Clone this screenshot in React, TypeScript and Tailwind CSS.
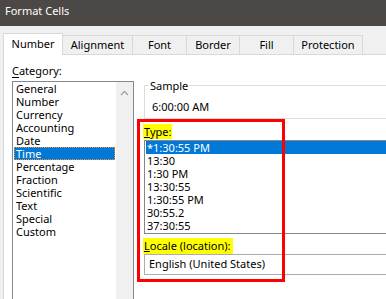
const TABS = ['Number', 'Alignment', 'Font', 'Border', 'Fill', 'Protection']
const TAB_WIDTHS = ['w-[60px]', 'w-[70px]', 'w-[54px]', 'w-[53px]', 'w-[54px]', 'w-[69px]']

const CATEGORIES = [
  'General',
  'Number',
  'Currency',
  'Accounting',
  'Date',
  'Time',
  'Percentage',
  'Fraction',
  'Scientific',
  'Text',
  'Special',
  'Custom',
]

const TYPES = ['*1:30:55 PM', '13:30', '1:30 PM', '13:30:55', '1:30:55 PM', '30:55.2', '37:30:55']

export default function App() {
  return (
    <div className="relative w-[386px] h-[299px] overflow-hidden bg-[#f0f0f0] text-[11px] text-black font-['Noto_Sans',sans-serif] flex flex-col">
      {/* title bar */}
      <div className="h-[26px] shrink-0 bg-[#4b4845] text-white pl-[5px] pt-[3px] leading-[15px]">
        Format Cells
      </div>

      {/* tabs */}
      <div className="h-[29px] shrink-0 flex items-end pl-[3px]">
        {TABS.map((tab, i) =>
          i === 0 ? (
            <div
              key={tab}
              className={`${TAB_WIDTHS[i]} h-[22px] bg-white border border-b-0 border-[#d9d9d9] flex items-center justify-center`}
            >
              {tab}
            </div>
          ) : (
            <div
              key={tab}
              className={`${TAB_WIDTHS[i]} h-[20px] border-t border-r border-b border-[#d9d9d9] flex items-center justify-center`}
            >
              {tab}
            </div>
          ),
        )}
        <div className="flex-1 border-b border-[#d9d9d9]" />
      </div>

      {/* page */}
      <div className="flex-1 ml-[3px] bg-white border-l border-[#d9d9d9] flex pl-[8px]">
        <div className="w-[122px] shrink-0 flex flex-col">
          <div className="mt-[8px] leading-[15px]">
            <span className="underline underline-offset-[2px]">C</span>ategory:
          </div>
          <div className="mt-[3px] h-[240px] border border-[#828790] flex">
            <div className="flex-1 pt-[0px] px-[1px] leading-[13px]">
              {CATEGORIES.map((c) =>
                c === 'Time' ? (
                  <div
                    key={c}
                    className="h-[13px] pl-[1px] bg-[#0078d7] text-white border border-dotted border-[#ff8728] leading-[11px]"
                  >
                    {c}
                  </div>
                ) : (
                  <div key={c} className="h-[13px] pl-[2px]">
                    {c}
                  </div>
                ),
              )}
            </div>
            <div className="w-[17px] bg-[#f0f0f0] flex justify-center pt-[8px]">
              <svg width="9" height="6" viewBox="0 0 9 6">
                <polyline points="1,5 4.5,1.5 8,5" fill="none" stroke="#a3a3a3" strokeWidth="1.3" />
              </svg>
            </div>
          </div>
        </div>

        <div className="ml-[10px] w-[260px] shrink-0 flex flex-col">
          <fieldset className="mt-[23px] border border-[#dcdcdc] pl-[4px] pb-[4px]">
            <legend className="px-[1px] leading-[15px]">Sample</legend>
            <div className="mt-[6px] ml-[3px] leading-[15px]">6:00:00 AM</div>
          </fieldset>

          <div className="mt-[7px] leading-[12px]">
            <span className="bg-[#ffff00] -ml-[1px] pl-[1px] pr-[1px]">
              <span className="underline underline-offset-[1px]">T</span>ype:
            </span>
          </div>
          <div className="mt-[2px] border border-[#828790] p-[1px] pt-0 leading-[13px]">
            {TYPES.map((t, i) => (
              <div
                key={t}
                className={`h-[13px] pl-[1px] ${i === 0 ? 'bg-[#0078d7] text-white' : ''}`}
              >
                {t}
              </div>
            ))}
          </div>

          <div className="mt-[4px] leading-[14px]">
            <span className="bg-[#ffff00] -ml-[1px] pl-[1px] pr-[2px] inline-block h-[16px] leading-[16px]">
              <span className="underline underline-offset-[1px]">L</span>ocale (location):
            </span>
          </div>
          <div className="mt-[0px] h-[21px] border border-[#abadb3] pl-[4px] flex items-center">
            English (United States)
          </div>
        </div>
      </div>

      {/* annotation */}
      <div className="absolute left-[137px] top-[119px] w-[148px] h-[163px] border-[3px] border-[#ff0000]" />
    </div>
  )
}
